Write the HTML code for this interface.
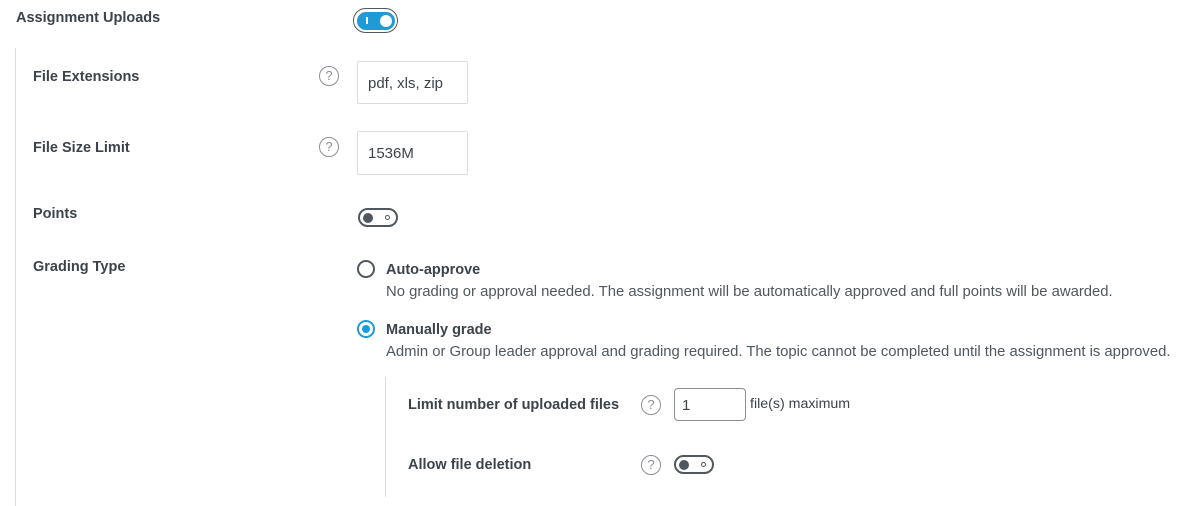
<!DOCTYPE html>
<html><head><style>
body{margin:0;width:1192px;height:506px;background:#fff;font-family:"Liberation Sans",sans-serif;color:#3c434a;position:relative;overflow:hidden}
.a{position:absolute}
.lbl{font-weight:bold;font-size:14.5px;color:#3c434a}
.q{position:absolute;width:18px;height:18px;border:1.5px solid #8c8f94;border-radius:50%;color:#8c8f94;font-size:13px;text-align:center;line-height:18px;box-sizing:content-box}
.inp{position:absolute;border:1px solid #dcdcde;border-radius:2px;font-size:15px;color:#3c434a;box-sizing:border-box;padding-left:10px}
.off{position:absolute;width:36px;height:15px;border:2px solid #50575e;border-radius:10px}
.off:before{content:"";position:absolute;left:3px;top:2.5px;width:10px;height:10px;border-radius:50%;background:#50575e}
.off:after{content:"";position:absolute;right:6px;top:4.5px;border-radius:50%;border:1.5px solid #50575e;box-sizing:content-box;width:3px;height:3px}
.desc{font-size:14.85px;color:#50575e}
</style></head><body>
<div class="a lbl" style="left:16px;top:10px">Assignment Uploads</div>
<div class="a" style="left:353px;top:8px;width:43px;height:23px;border:1.5px solid #50575e;border-radius:14px"></div>
<div class="a" style="left:357px;top:12px;width:38px;height:18px;background:#1e9bd7;border-radius:10px"></div>
<div class="a" style="left:366px;top:17px;width:2px;height:7px;background:#fff"></div>
<div class="a" style="left:380px;top:15px;width:12px;height:12px;border-radius:50%;background:#fff"></div>

<div class="a" style="left:15px;top:48px;width:1px;height:458px;background:#dcdcde"></div>

<div class="a lbl" style="left:33px;top:69px">File Extensions</div>
<div class="q" style="left:319px;top:66px">?</div>
<div class="inp" style="left:357px;top:61px;width:111px;height:43px;line-height:43px">pdf, xls, zip</div>

<div class="a lbl" style="left:33px;top:140px">File Size Limit</div>
<div class="q" style="left:319px;top:137px">?</div>
<div class="inp" style="left:357px;top:131px;width:111px;height:44px;line-height:44px">1536M</div>

<div class="a lbl" style="left:33px;top:206px">Points</div>
<div class="off" style="left:358px;top:208px"></div>

<div class="a lbl" style="left:33px;top:259px">Grading Type</div>
<div class="a" style="left:357px;top:260px;width:14px;height:14px;border:2px solid #50575e;border-radius:50%"></div>
<div class="a lbl" style="left:386px;top:262px">Auto-approve</div>
<div class="a desc" style="left:386px;top:284px">No grading or approval needed. The assignment will be automatically approved and full points will be awarded.</div>
<div class="a" style="left:357px;top:320px;width:14px;height:14px;border:2px solid #1e9bd7;border-radius:50%"></div>
<div class="a" style="left:362px;top:325px;width:8px;height:8px;background:#1e9bd7;border-radius:50%"></div>
<div class="a lbl" style="left:386px;top:322px">Manually grade</div>
<div class="a desc" style="left:386px;top:344px">Admin or Group leader approval and grading required. The topic cannot be completed until the assignment is approved.</div>

<div class="a" style="left:385px;top:377px;width:1px;height:120px;background:#dcdcde"></div>
<div class="a lbl" style="left:408px;top:397px">Limit number of uploaded files</div>
<div class="q" style="left:641px;top:395px">?</div>
<div class="inp" style="left:674px;top:388px;width:72px;height:33px;line-height:33px;border-color:#8c8f94;border-radius:4px;padding-left:7px">1</div>
<div class="a desc" style="left:750px;top:396px;color:#3c434a;font-size:14.2px">file(s) maximum</div>
<div class="a lbl" style="left:408px;top:457px">Allow file deletion</div>
<div class="q" style="left:641px;top:455px">?</div>
<div class="off" style="left:674px;top:455px"></div>
</body></html>
